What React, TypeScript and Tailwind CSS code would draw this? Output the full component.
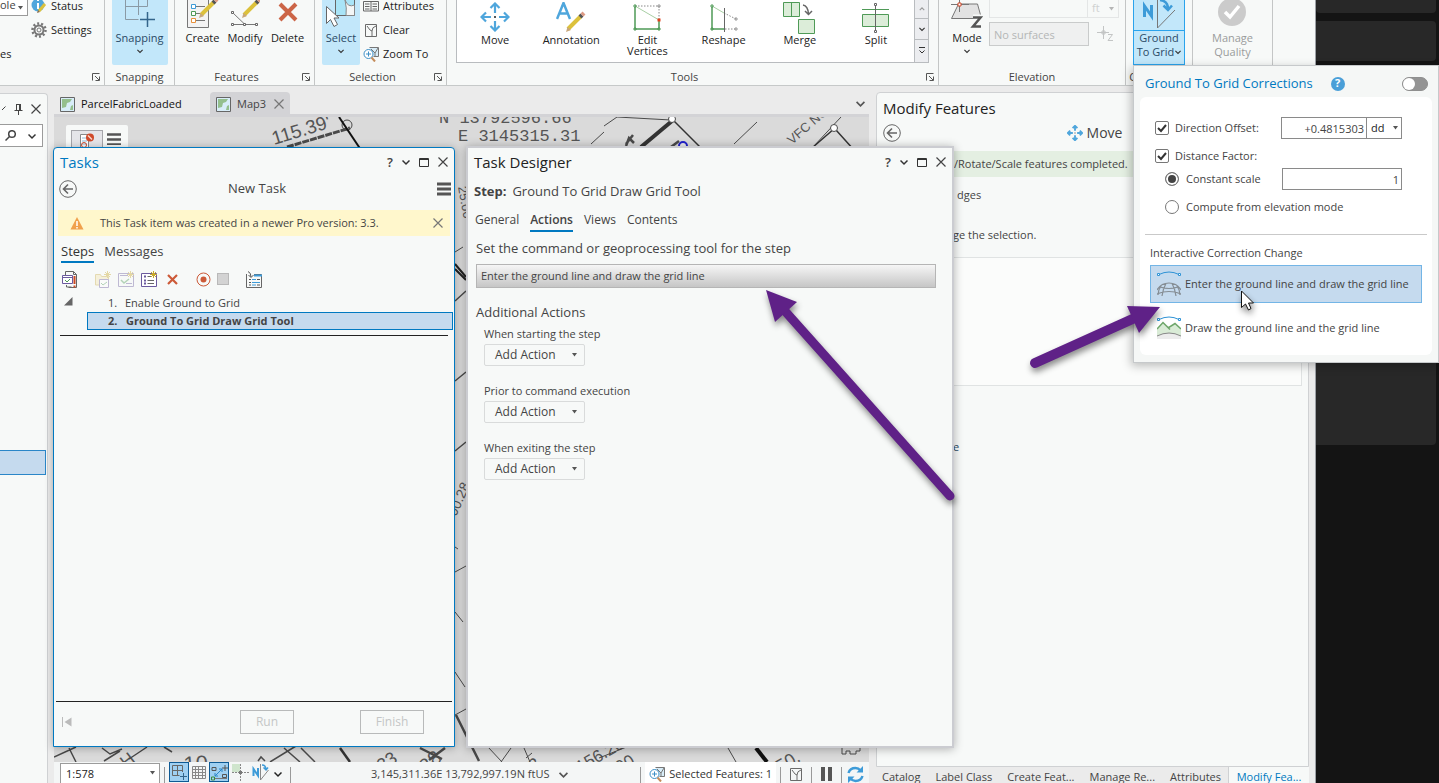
import { useState } from "react";
import type { ReactNode } from "react";

const line = "#6a6a6a";

export default function App() {
  return (
    <div className="relative flex h-screen w-full overflow-hidden bg-[#141414] font-['Open_Sans','Noto_Sans',sans-serif] text-[11px] text-[#444]">
      <div className="flex min-w-0 flex-1 flex-col border-r border-[#9da1a6] bg-[#ebebeb]">
        <Ribbon />
        <div className="flex min-h-0 flex-1">
          <LeftPane />
          <MapPane />
          <ModifyFeaturesPane />
        </div>
      </div>
      <DesktopStrip />

      <TasksWindow />
      <TaskDesignerWindow />
      <GroundToGridPopup />
      <CalloutArrows />
    </div>
  );
}

/* ---------- ribbon ---------- */

function Ribbon() {
  return (
    <div className="flex h-[86px] shrink-0 overflow-hidden border-b border-[#c6c9c9] bg-[#f7f9f8]">
      <RibbonGroup label="" launcher width="w-[105px]">
        <div className="w-7 shrink-0">
          <div className="flex h-4 items-center justify-between overflow-hidden border-r border-b border-[#9a9a9a] bg-white pr-1">
            <span className="-mt-1">ole</span>
            <Caret />
          </div>
          <div className="mt-[30px] leading-4 text-[#222]">es</div>
        </div>
        <div className="ml-[3px] flex flex-col">
          <SmallButton label="Status" icon={<StatusIcon />} />
          <SmallButton label="Settings" icon={<GearIcon />} />
        </div>
      </RibbonGroup>

      <RibbonGroup label="Snapping" width="w-[70px]" content="justify-center">
        <LargeButton label="Snapping" icon={<SnapIcon />} active chevron className="w-14" />
      </RibbonGroup>

      <RibbonGroup label="Features" launcher width="w-[140px]" content="pl-[6px]">
        <LargeButton label="Create" icon={<CreateIcon />} className="w-[43px]" />
        <LargeButton label="Modify" icon={<ModifyIcon />} className="w-[42px]" />
        <LargeButton label="Delete" icon={<DeleteIcon />} className="w-[43px]" />
      </RibbonGroup>

      <RibbonGroup label="Selection" launcher width="w-[132px]" content="pl-[7px]">
        <LargeButton label="Select" icon={<SelectIcon />} active chevron className="w-[38px]" />
        <div className="ml-[3px] flex flex-col">
          <SmallButton label="Attributes" icon={<TableIcon />} />
          <SmallButton label="Clear" icon={<ClearIcon />} />
          <SmallButton label="Zoom To" icon={<ZoomToIcon />} />
        </div>
      </RibbonGroup>

      <RibbonGroup label="Tools" launcher width="w-[492px]" content="px-[9px]">
        <div className="flex h-[63px] w-full border border-t-0 border-[#b9bcbf] bg-white">
          <div className="flex flex-1">
            <GalleryItem label="Move" icon={<MoveIcon size={30} />} />
            <GalleryItem label="Annotation" icon={<AnnotationIcon />} />
            <GalleryItem label="Edit Vertices" icon={<VerticesIcon />} />
            <GalleryItem label="Reshape" icon={<ReshapeIcon />} />
            <GalleryItem label="Merge" icon={<MergeIcon />} />
            <GalleryItem label="Split" icon={<SplitIcon />} />
          </div>
          <div className="flex w-[14px] flex-col border-l border-[#b9bcbf] bg-[#ecedf0]">
            <button type="button" aria-label="Scroll up" className="flex h-[18px] items-center justify-center">
              <Chevron up size={6} color="#9a9a9a" />
            </button>
            <button type="button" aria-label="Scroll down" className="flex h-[22px] items-center justify-center border-y border-[#b9bcbf]">
              <Chevron size={6} />
            </button>
            <button type="button" aria-label="More tools" className="flex flex-1 items-center justify-center">
              <svg width="6" height="8" viewBox="0 0 6 8" fill="none" stroke="#333">
                <path d="M0 .5h6M.5 3.500 3 6l2.500-2.500" />
              </svg>
            </button>
          </div>
        </div>
      </RibbonGroup>

      <RibbonGroup label="Elevation" width="w-[187px]" content="pl-[6px]">
        <LargeButton label="Mode" icon={<ModeIcon />} chevron className="w-11" />
        <div className="flex flex-col">
          <div className="flex">
            <div className="h-[18px] w-[99px] border border-t-0 border-[#e4e6e6]" />
            <div className="flex h-[18px] w-[31px] items-center justify-between border border-t-0 border-l-0 border-[#e4e6e6] px-1 text-[#cfd1d1]">
              ft <Caret color="#b5b5b5" />
            </div>
          </div>
          <div className="mt-1 flex items-center gap-2">
            <input
              aria-label="Elevation surface"
              disabled
              defaultValue="No surfaces"
              className="h-6 w-[100px] border border-[#c9cbcb] bg-[#eff0f0] px-1 text-[#b4b6b6]"
            />
            <svg width="17" height="16" viewBox="0 0 17 16" fill="none" stroke="#c3c5c5">
              <path d="M0 6.500h12M6.500 0v13M5 5h3v3H5zM11 8.500h4.500l-4.500 6h5" />
            </svg>
          </div>
        </div>
      </RibbonGroup>

      <RibbonGroup label="Corrections" width="w-[67px]" content="pl-[7px]">
        <button type="button" className="flex h-[65px] w-[52px] flex-col items-center border border-t-0 border-[#2aa3ec] bg-[#c2e7fa] leading-[14px] text-[#2b4a66]">
          <span className="flex h-[31px] w-full justify-center border-b border-[#2aa3ec]">
            <GroundGridIcon />
          </span>
          <span>Ground</span>
          <span className="flex items-center gap-px whitespace-nowrap">
            To Grid <Chevron size={6} />
          </span>
        </button>
      </RibbonGroup>

      <RibbonGroup label="" width="w-20" content="justify-center">
        <button type="button" disabled className="flex h-[60px] flex-col items-center leading-[14px] text-[#9a9c9c]">
          <svg width="28" height="31" viewBox="0 0 28 31">
            <circle cx="14" cy="12" r="14" fill="#cbcbcb" />
            <path d="m7 12 5 5 9-11" fill="none" stroke="#fff" strokeWidth="3.500" />
          </svg>
          <span>Manage</span>
          <span>Quality</span>
        </button>
      </RibbonGroup>
    </div>
  );
}

type RibbonGroupProps = {
  label: string;
  width: string;
  content?: string;
  launcher?: boolean;
  children: ReactNode;
};

function RibbonGroup({ label, width, content = "", launcher, children }: RibbonGroupProps) {
  return (
    <div className={`flex shrink-0 flex-col border-r border-[#c4c6c6] ${width}`}>
      <div className={`flex h-[69px] w-full ${content}`}>{children}</div>
      <div className="flex h-4 w-full items-center">
        <span className="flex-1 text-center leading-4">{label}</span>
        {launcher ? (
          <button type="button" aria-label={`${label} options`} className="flex w-4 justify-center">
            <svg width="8" height="8" viewBox="0 0 8 8" fill="none" stroke="#555">
              <path d="M7.500.5h-7v7M3 3l4 4M7.500 3.500v4h-4" />
            </svg>
          </button>
        ) : null}
      </div>
    </div>
  );
}

type LargeButtonProps = {
  label: string;
  icon: ReactNode;
  active?: boolean;
  chevron?: boolean;
  className?: string;
};

function LargeButton({ label, icon, active, chevron, className = "" }: LargeButtonProps) {
  return (
    <button
      type="button"
      className={`flex h-[65px] shrink-0 flex-col items-center ${
        active ? "rounded-b-xs bg-[#c2e7fa] text-[#2b4a66]" : "text-[#222]"
      } ${className}`}
    >
      <span className="flex h-[30px]">{icon}</span>
      <span className="leading-4">{label}</span>
      {chevron ? (
        <span className="mt-[2px]">
          <Chevron size={6} />
        </span>
      ) : null}
    </button>
  );
}

function SmallButton({ label, icon }: { label: string; icon: ReactNode }) {
  return (
    <button type="button" className="flex h-6 items-center gap-1 whitespace-nowrap text-[#222] first:-mt-[6px]">
      {icon}
      {label}
    </button>
  );
}

function GalleryItem({ label, icon }: { label: string; icon: ReactNode }) {
  return (
    <button type="button" className="flex flex-1 flex-col items-center pt-[2px] leading-[11px] text-[#222]">
      <span className="mb-px flex h-[31px]">{icon}</span>
      <span className="flex w-[60px] justify-center">{label}</span>
    </button>
  );
}

/* ---------- docked panes ---------- */

function LeftPane() {
  return (
    <div className="mt-[7px] flex w-12 shrink-0 flex-col rounded-tr-sm border-t border-r border-[#cfd1d3] bg-[#f7f9f8]">
      <div className="flex h-[30px] items-center justify-end gap-2 pr-[6px]">
        <svg width="4" height="6" viewBox="0 0 4 6" fill="none" stroke="#444">
          <path d="M0 4 3.500.5" />
        </svg>
        <svg width="9" height="11" viewBox="0 0 9 11" fill="none" stroke="#444">
          <path d="M2.500 0v6M2 .5h4M5.500 0v6M6.500 0v6M.5 6.500h8M4.500 7v4" />
        </svg>
        <CloseIcon size={10} />
      </div>
      <div className="mr-1 flex h-[23px] items-center justify-end gap-3 border border-l-0 border-[#9b9b9b] bg-white pr-[6px]">
        <svg width="11" height="11" viewBox="0 0 11 11" fill="none" stroke="#444" strokeWidth="1.500">
          <circle cx="7" cy="4" r="3.300" />
          <path d="M4.500 6.500.5 10.500" />
        </svg>
        <Chevron size={8} />
      </div>
      <div className="mt-[303px] mr-px h-[25px] border border-l-0 border-[#2a86c8] bg-[#c5daee]" />
    </div>
  );
}

function MapPane() {
  return (
    <div className="ml-[6px] flex min-w-0 flex-1 flex-col">
      <div className="flex h-[31px] items-end border-b-3 border-[#d3d3d6] pt-[6px]">
        <button type="button" className="flex h-[22px] w-[156px] items-center gap-[6px] pt-[2px] pl-[6px] text-[#111]">
          <MapDocIcon />
          ParcelFabricLoaded
        </button>
        <div className="flex h-[22px] items-center gap-2 rounded-t-sm bg-[#d3d3d6] px-[6px] pt-[2px]">
          <button type="button" className="flex items-center gap-[6px]">
            <MapDocIcon />
            Map3
          </button>
          <CloseIcon size={10} color="#777" />
        </div>
        <span className="mr-1 mb-[6px] ml-auto">
          <Chevron size={9} color="#555" />
        </span>
      </div>
      <div className="relative min-h-0 flex-1 overflow-hidden bg-[#dadada]">
        <MapLinework />
        <div className="absolute top-2 left-3 flex h-10 w-[62px] items-start gap-1 rounded-t-xs bg-[#f7f9f8] p-[5px]">
          <div className="flex h-7 w-8 justify-center border border-[#a5a5aa] bg-[#e5e5e9] pt-[2px]">
            <svg width="16" height="20" viewBox="0 0 16 20" fill="none">
              <path d="M1.500 1.500h8v18h-8z" fill="#fff" stroke="#888" />
              <path d="M3 5h5M3 8h5M3 11h5" stroke="#8db8d8" />
              <circle cx="11" cy="4.500" r="4" fill="#d0492a" />
              <path d="m9 2.500 4 4" stroke="#f6d9d0" strokeWidth="1.500" />
              <circle cx="5" cy="12" r="2.500" stroke="#d0492a" />
            </svg>
          </div>
          <svg width="14" height="15" viewBox="0 0 14 15" stroke="#555" strokeWidth="2.500">
            <path d="M0 4.500h14M0 9.500h14M0 14.500h14" />
          </svg>
        </div>
      </div>
      <StatusBar />
    </div>
  );
}

function StatusBar() {
  return (
    <div className="flex h-[21px] shrink-0 items-start overflow-hidden bg-[#f4f6f6] pl-[6px]">
      <div className="relative mt-px">
        <select aria-label="Map scale" className="h-[22px] w-[100px] appearance-none border border-[#9b9b9b] bg-white px-[5px] text-[#222]">
          <option>1:578</option>
        </select>
        <span className="absolute top-2 right-[5px]">
          <Caret />
        </span>
      </div>
      <Bar className="ml-1" />
      <div className="ml-1 flex gap-[3px]">
        <span className="flex size-5 items-center justify-center border border-[#0e5a94] bg-[#9fd0f2]">
          <svg width="17" height="17" viewBox="0 0 17 17" fill="none" stroke="#666">
            <path d="M1.500 1.500h10v10h-10zM6.500 1.500v10M1.500 6.500h10" />
            <path d="M12.500 8v8M8.500 12.500h8" stroke="#9fd0f2" strokeWidth="4" />
            <path d="M12.500 9v7M9 12.500h7" stroke="#33658b" />
          </svg>
        </span>
        <svg width="14" height="20" viewBox="0 0 14 20" fill="none" stroke="#888">
          <path d="M.5 4.500h13v12h-13zM3.500 4v13M6.500 4v13M10.500 4v13M0 7.500h14M0 10.500h14M0 13.500h14" />
        </svg>
        <span className="flex size-5 items-center justify-center border border-[#0e5a94] bg-[#9fd0f2]">
          <svg width="17" height="17" viewBox="0 0 17 17" fill="none" stroke="#555">
            <path d="M1 3.500h4v3H1zM11.500 10.500h4v3h-4zM14 1v6M11 4h6" />
            <path d="m4 12 7-7M4 9v3h3M8 5h3v3" stroke="#2a86c8" />
            <path d="M3 14.500h13" stroke="#777" />
            <path d="M.5 13h3v3h-3z" stroke="#3c8a3c" />
          </svg>
        </span>
        <svg width="17" height="20" viewBox="0 0 17 20" fill="none">
          <path d="M0 2h8v8H0z" fill="#cfe5cd" />
          <path d="M8.500 2v17M0 10.500h17" stroke="#888" strokeDasharray="2 1" />
          <path d="M7 9h3v3H7z" fill="#777" />
        </svg>
        <svg width="17" height="20" viewBox="0 0 17 20" fill="none">
          <path d="M1.500 14V7l4.500 6.500V6" stroke="#3d9bd8" strokeWidth="2" />
          <path d="M8.500 2v16l8-10" stroke="#888" />
          <path d="M10 3q4 0 4 5m-2.500-2.500L14 8l2-2.500" stroke="#3d9bd8" strokeWidth="1.500" />
        </svg>
        <span className="mt-2 ml-[2px]">
          <Chevron size={8} color="#222" />
        </span>
      </div>
      <Bar className="ml-2" />
      <span className="ml-20 flex h-6 min-w-0 items-center gap-[10px] whitespace-nowrap">
        3,145,311.36E 13,792,997.19N ftUS
        <Chevron size={9} color="#555" />
      </span>
      <div className="ml-auto flex items-start">
        <Bar />
        <span className="ml-1 flex h-6 items-center gap-1 bg-white px-1 whitespace-nowrap text-[#333]">
          <ZoomToIcon />
          Selected Features: 1
        </span>
        <Bar className="ml-1" />
        <span className="mx-[7px] mt-[6px]">
          <ClearIcon />
        </span>
        <Bar />
        <svg className="mx-[9px] mt-[5px]" width="11" height="14" viewBox="0 0 11 14" fill="#555">
          <path d="M0 0h4v14H0zM7 0h4v14H7z" />
        </svg>
        <Bar />
        <svg className="mx-[5px] mt-1" width="17" height="17" viewBox="0 0 17 17" fill="none" stroke="#3d9bd8" strokeWidth="2.500">
          <path d="M1.500 7q1.500-5 7-5 3 0 5 2.500M15.500 10q-1.500 5-7 5-3 0-5-2.500" />
          <path d="M16 0v6.500H9.500zM1 17v-6.500h6.500z" fill="#3d9bd8" stroke="none" />
        </svg>
      </div>
    </div>
  );
}

function Bar({ className = "" }: { className?: string }) {
  return <span className={`mt-[5px] h-4 w-px shrink-0 bg-[#999] ${className}`} />;
}

const paneTabs = ["Catalog", "Label Class", "Create Feat...", "Manage Re...", "Attributes"];

function ModifyFeaturesPane() {
  return (
    <div className="mt-[6px] mr-[6px] ml-[7px] flex w-[433px] shrink-0 flex-col">
      <div className="flex flex-1 flex-col rounded-t-sm border border-[#cfd1d3] bg-[#f7f9f8]">
        <h2 className="flex h-[30px] items-center pl-[6px] text-[15px] text-[#222]">Modify Features</h2>
        <div className="flex h-7 items-start pt-px pl-[6px]">
          <BackButton />
          <span className="flex flex-1 items-center justify-center gap-1 pr-5 text-sm leading-[18px]">
            <MoveIcon size={16} />
            Move
          </span>
        </div>
        <div className="flex h-[26px] items-center bg-[#e4efe2] pl-[77px] whitespace-nowrap">/Rotate/Scale features completed.</div>
        <div className="mt-[10px] pl-20 leading-4">dges</div>
        <div className="mt-6 pl-[76px] leading-4">ge the selection.</div>
        <div className="mt-[14px] mr-[6px] ml-[6px] h-[129px] border border-[#e0e3e3] bg-[#fbfcfb]" />
        <div className="mt-[53px] pl-[76px] leading-4 text-[#2b4a66]">e</div>
      </div>
      <div className="flex h-4 shrink-0 overflow-hidden">
        <div className="flex h-5 flex-1 items-center justify-between border-r border-[#cfd1d3] pr-[7px] pl-[6px]">
          {paneTabs.map((tab) => (
            <button key={tab} type="button" className="whitespace-nowrap">
              {tab}
            </button>
          ))}
        </div>
        <button type="button" className="h-5 w-20 bg-[#f7f9f8] whitespace-nowrap text-[#0079c1]">
          Modify Fea...
        </button>
      </div>
    </div>
  );
}

function DesktopStrip() {
  return (
    <div className="flex w-[123px] shrink-0 flex-col gap-2 pr-[3px]">
      <div className="h-[13px] rounded-b-sm bg-[#282828]" />
      <div className="h-10 rounded-r-sm bg-[#282828]" />
      <div className="h-[376px] rounded-r-sm bg-[#282828]" />
    </div>
  );
}

/* ---------- floating windows ---------- */

function WindowTitle({ title, accent }: { title: string; accent?: boolean }) {
  return (
    <div className="flex h-7 items-center pr-[6px] pl-[6px]">
      <h2 className={`flex-1 text-[15px] ${accent ? "text-[#0079c1]" : "text-[#222]"}`}>{title}</h2>
      <div className="flex items-center gap-[9px]">
        <button type="button" aria-label="Help" className="text-[13px] leading-4 font-semibold">
          ?
        </button>
        <button type="button" aria-label="Window menu">
          <Chevron size={8} />
        </button>
        <button type="button" aria-label="Maximize">
          <svg width="10" height="9" viewBox="0 0 10 9" fill="none" stroke="#333">
            <path d="M.5.5h9v8h-9zM0 1.500h10" />
          </svg>
        </button>
        <button type="button" aria-label="Close">
          <CloseIcon size={10} />
        </button>
      </div>
    </div>
  );
}

function TasksWindow() {
  return (
    <section className="absolute top-[147px] left-[53px] flex h-[600px] w-[402px] flex-col rounded-t-sm border border-[#0079c1] bg-[#f7f9f8] shadow-[0_1px_9px_rgba(0,0,0,0.3)]">
      <WindowTitle title="Tasks" accent />
      <div className="flex h-[26px] items-center justify-between pr-[3px] pl-[5px]">
        <BackButton />
        <span className="text-[13px]">New Task</span>
        <svg width="14" height="14" viewBox="0 0 14 14" stroke="#555" strokeWidth="3">
          <path d="M0 2h14M0 7h14M0 12h14" />
        </svg>
      </div>
      <div className="mx-1 mt-2 flex h-[26px] items-center bg-[#fff7cc] pr-[7px] pl-3">
        <svg width="14" height="13" viewBox="0 0 14 13">
          <path d="M7 0 13.500 12.500H.5z" fill="#f0a04c" />
          <path d="M7 4v5M7 10v1.500" stroke="#fff" strokeWidth="1.500" />
        </svg>
        <span className="ml-4 flex-1 whitespace-nowrap">This Task item was created in a newer Pro version: 3.3.</span>
        <button type="button" aria-label="Dismiss">
          <CloseIcon size={10} color="#777" />
        </button>
      </div>
      <div className="mt-[5px] flex gap-[10px] pl-[7px] text-[13px] leading-5">
        <button type="button" className="border-b-2 border-[#0079c1] font-medium text-[#333]">
          Steps
        </button>
        <button type="button" className="border-b-2 border-transparent">
          Messages
        </button>
      </div>
      <div className="mt-[7px] flex h-[18px] items-center pl-2">
        <StepsToolbar />
      </div>
      <div className="mt-[6px] flex h-[18px] items-center pl-[10px]">
        <svg className="mb-1" width="9" height="9" viewBox="0 0 9 9">
          <path d="M8.500 0v8.500H0z" fill="#666" />
        </svg>
        <span className="ml-[35px] w-[17px]">1.</span>
        Enable Ground to Grid
      </div>
      <div className="mr-px ml-[33px] flex h-[18px] items-center border border-[#0079c1] bg-[#c5daee] pl-5 font-bold">
        <span className="w-[18px]">2.</span>
        Ground To Grid Draw Grid Tool
      </div>
      <div className="mt-[5px] mr-[6px] ml-[6px] border-t border-[#222]" />

      <div className="mx-[2px] mt-auto flex h-[45px] items-start border-t border-[#222] pt-2 pl-[6px]">
        <button type="button" disabled aria-label="Restart" className="mt-[7px]">
          <svg width="10" height="10" viewBox="0 0 10 10">
            <path d="M.5 0v10" stroke="#bbb" />
            <path d="M9.500.5v9L2.500 5z" fill="#bbb" />
          </svg>
        </button>
        <button type="button" disabled className="ml-[168px] h-6 w-[54px] border border-[#b8baba] text-xs text-[#c4c6c6]">
          Run
        </button>
        <button type="button" disabled className="ml-[66px] h-6 w-16 border border-[#b8baba] text-xs text-[#c4c6c6]">
          Finish
        </button>
      </div>
    </section>
  );
}

function StepsToolbar() {
  return (
    <div className="flex items-center">
      <button type="button" aria-label="Task item">
        <svg width="16" height="17" viewBox="0 0 16 17" fill="none">
          <path d="M3.500 5V.5h8l3 3v13h-8M11.500.5v3h3" stroke="#666" />
          <path d="M.5 4.500h10v8H.5zM.5 6.500h10" stroke="#6b5a9e" fill="#fff" />
          <path d="m3 9 2 2 3-3" stroke="#4f9a57" />
          <path d="M4.500 14v2h5" stroke="#666" />
          <path d="M12.500 5v8M12.500 14.500v2" stroke="#cc4a24" strokeWidth="2" />
        </svg>
      </button>
      <button type="button" disabled aria-label="New task group" className="ml-[17px] opacity-40">
        <svg width="16" height="17" viewBox="0 0 16 17" fill="none">
          <path d="M.5 14V3.500h5l1 2h7V14z" fill="#f4e5ae" stroke="#c8ac4a" />
          <path d="M4.500 8.500h9v8h-9z" fill="#fff" stroke="#6b5a9e" />
          <path d="m6 12 2 2 4-3" stroke="#4f9a57" />
          <Spark />
        </svg>
      </button>
      <button type="button" disabled aria-label="New task" className="ml-[7px] opacity-40">
        <svg width="17" height="17" viewBox="0 0 17 17" fill="none">
          <path d="M.5 2.500h15v13H.5zM2 4.500h8" stroke="#6b5a9e" />
          <path d="m3 9 3 3 5-4" stroke="#4f9a57" strokeWidth="1.500" />
          <path d="M8 12.500h6" stroke="#6b5a9e" />
          <Spark />
        </svg>
      </button>
      <button type="button" aria-label="New step" className="ml-[6px]">
        <svg width="17" height="17" viewBox="0 0 17 17" fill="none">
          <path d="M.5 2.500h15v13H.5z" stroke="#6b5a9e" fill="#fff" />
          <path d="M3 5.500h2M3 9.500h2M3 12.500h2" stroke="#6b5a9e" strokeWidth="2" />
          <path d="M6.500 5.500H10M6.500 9.500H13M6.500 12.500H13" stroke="#666" />
          <Spark />
        </svg>
      </button>
      <button type="button" aria-label="Delete step" className="ml-[9px]">
        <svg width="11" height="11" viewBox="0 0 11 11" stroke="#cc5a38" strokeWidth="2.200">
          <path d="m1 1 9 9M10 1l-9 9" />
        </svg>
      </button>
      <button type="button" aria-label="Record" className="ml-[18px]">
        <svg width="15" height="15" viewBox="0 0 15 15" fill="none">
          <circle cx="7.500" cy="7.500" r="6.500" stroke="#cc5a38" />
          <circle cx="7.500" cy="7.500" r="3" fill="#cc5a38" />
        </svg>
      </button>
      <span className="ml-[6px] size-3 border border-[#b9b9b9] bg-[#d3d3d3]" />
      <button type="button" aria-label="Task designer" className="ml-[17px]">
        <svg width="17" height="17" viewBox="0 0 17 17" fill="none">
          <path d="M.5 3v13.500h15V3.500H8" stroke="#666" />
          <path d="M8 4.500h8" stroke="#3d9bd8" strokeWidth="2" />
          <path d="M2 .5q3 1 3 5.500m-2.500-2L5 6.500 7.500 4" stroke="#555" />
          <path d="M3 8.500h2M3 11.500h2M3 14h2M11 8.500h3M11 14h3" stroke="#555" />
          <path d="M6 8.500h4M6 11.500h8M6 14h4" stroke="#3d9bd8" />
        </svg>
      </button>
    </div>
  );
}

function Spark() {
  return <path d="M12.500 0v7M9 3.500h7M10 1l5 5M15 1l-5 5" stroke="#c8a92c" />;
}

const designerTabs = ["General", "Actions", "Views", "Contents"];
const actionSlots = ["When starting the step", "Prior to command execution", "When exiting the step"];

function TaskDesignerWindow() {
  const [tab, setTab] = useState("Actions");

  return (
    <section className="absolute top-[146px] left-[466px] flex h-[602px] w-[488px] flex-col border-2 border-[#cbccd1] bg-[#f7f9f8] shadow-[0_1px_9px_rgba(0,0,0,0.3)]">
      <WindowTitle title="Task Designer" />
      <p className="pt-[5px] pl-[6px] text-[13px] leading-5">
        <b className="mr-[6px]">Step:</b>Ground To Grid Draw Grid Tool
      </p>
      <div className="mt-[9px] flex gap-[11px] pl-[7px] text-xs leading-5">
        {designerTabs.map((name) => (
          <button
            key={name}
            type="button"
            onClick={() => setTab(name)}
            className={`border-b-2 ${tab === name ? "border-[#0079c1] font-semibold" : "border-transparent"}`}
          >
            {name}
          </button>
        ))}
      </div>
      <h3 className="mt-[6px] pl-2 text-[13px] leading-5 font-medium">Set the command or geoprocessing tool for the step</h3>
      <button
        type="button"
        className="mt-[6px] mr-4 ml-2 h-6 border border-[#b5b5b5] bg-linear-to-b from-[#f6f6f6] to-[#c6c6c6] pl-1 text-left"
      >
        Enter the ground line and draw the grid line
      </button>
      <h3 className="mt-[14px] pl-2 text-[13px] leading-5 font-medium">Additional Actions</h3>
      {actionSlots.map((slot) => (
        <div key={slot} className="mb-[13px] pt-1 pl-4">
          <div className="leading-4">{slot}</div>
          <button
            type="button"
            className="mt-[2px] flex h-[22px] w-[101px] items-center justify-between rounded-xs border border-[#d9dbdb] pr-[7px] pl-[10px] text-xs"
          >
            Add Action
            <Caret />
          </button>
        </div>
      ))}
    </section>
  );
}

function GroundToGridPopup() {
  const [mode, setMode] = useState("constant");

  return (
    <section className="absolute top-[65px] right-0 flex h-[298px] w-[306px] flex-col border border-[#c6c9cb] bg-[#f5f7f6] px-[6px] pb-[7px] shadow-[-2px_3px_9px_rgba(0,0,0,0.25)]">
      <header className="flex h-[31px] shrink-0 items-center pt-1 pr-1 pl-[5px]">
        <h2 className="text-[13px] font-medium text-[#0079c1]">Ground To Grid Corrections</h2>
        <button type="button" aria-label="Help" className="ml-[18px] flex size-[14px] items-center justify-center rounded-full bg-[#4a9fd8] text-[11px] font-bold text-white">
          ?
        </button>
        <button type="button" role="switch" aria-checked="false" aria-label="Enable corrections" className="ml-auto flex h-[14px] w-[26px] rounded-full border border-[#8f8f8f] bg-[#949494]">
          <span className="size-3 rounded-full bg-white" />
        </button>
      </header>

      <div className="flex-1 rounded-md bg-white pt-5">
        <div className="flex h-[22px] items-center pr-[30px] pl-[15px]">
          <CheckRow id="direction" label="Direction Offset:" />
          <div className="ml-auto flex">
            <input
              aria-label="Direction offset value"
              defaultValue="+0.4815303"
              className="h-[22px] w-[86px] border border-[#8a8a8a] px-[2px] text-right"
            />
            <div className="relative">
              <select aria-label="Direction offset unit" className="-ml-px h-[22px] w-9 appearance-none border border-[#8a8a8a] bg-white pl-1 text-[#222]">
                <option>dd</option>
              </select>
              <span className="absolute top-[9px] right-1">
                <Caret />
              </span>
            </div>
          </div>
        </div>
        <div className="mt-[6px] flex h-[22px] items-center pl-[15px]">
          <CheckRow id="distance" label="Distance Factor:" />
        </div>
        <div className="mt-px flex h-[22px] items-center pr-[30px] pl-[25px]">
          <RadioRow id="constant" label="Constant scale" checked={mode === "constant"} onChange={() => setMode("constant")} />
          <input aria-label="Scale factor" defaultValue="1" className="ml-auto h-[22px] w-[120px] border border-[#8a8a8a] px-[2px] text-right" />
        </div>
        <div className="mt-[6px] flex h-[22px] items-center pl-[25px]">
          <RadioRow id="elevation" label="Compute from elevation mode" checked={mode === "elevation"} onChange={() => setMode("elevation")} />
        </div>
        <hr className="mx-[5px] mt-4 border-[#c9c9c9]" />
        <h3 className="mt-[10px] pl-[10px] leading-4">Interactive Correction Change</h3>
        <button type="button" className="mt-1 ml-[10px] flex h-[38px] w-[272px] items-center gap-1 border border-[#73b5e6] bg-[#c5daee] pl-[6px] whitespace-nowrap">
          <GlobeLineIcon />
          Enter the ground line and draw the grid line
        </button>
        <button type="button" className="mt-[6px] ml-[10px] flex h-[38px] w-[272px] items-center gap-1 pl-[7px] whitespace-nowrap">
          <TerrainLineIcon />
          Draw the ground line and the grid line
        </button>
      </div>
    </section>
  );
}

function CheckRow({ id, label }: { id: string; label: string }) {
  return (
    <label htmlFor={id} className="flex items-center gap-[6px]">
      <span className="relative flex size-[14px]">
        <input id={id} type="checkbox" defaultChecked className="size-[14px] appearance-none rounded-xs border border-[#777] bg-white" />
        <svg className="pointer-events-none absolute inset-0" width="14" height="14" viewBox="0 0 14 14" fill="none" stroke="#333" strokeWidth="2">
          <path d="m3 7 3 3 5-6" />
        </svg>
      </span>
      {label}
    </label>
  );
}

type RadioRowProps = {
  id: string;
  label: string;
  checked: boolean;
  onChange: () => void;
};

function RadioRow({ id, label, checked, onChange }: RadioRowProps) {
  return (
    <label htmlFor={id} className="flex items-center gap-[7px] whitespace-nowrap">
      <input
        id={id}
        type="radio"
        name="distance-mode"
        checked={checked}
        onChange={onChange}
        className="size-[14px] appearance-none rounded-full border border-[#777] bg-white checked:bg-[#444] checked:shadow-[inset_0_0_0_2px_#fff]"
      />
      {label}
    </label>
  );
}

/* ---------- map and callouts ---------- */

function MapLinework() {
  return (
    <svg className="absolute top-0 left-0" width="815" height="646" viewBox="0 0 815 646" fill="none" stroke="#4a4a4a">
      <g fill="#555" stroke="none" fontFamily="Liberation Sans" fontSize="17">
        <text transform="translate(220 28) rotate(-17)" fontSize="19">115.39&#39;</text>
        <text x="385" y="6" fontFamily="Liberation Mono">N 13792596.66</text>
        <text x="404" y="24" fontFamily="Liberation Mono">E 3145315.31</text>
        <text transform="translate(738 28) rotate(-41)" fontSize="13">VFC NO</text>
        <text transform="translate(130 655) rotate(-4)" fontSize="22">10</text>
        <text transform="translate(72 652) rotate(-38)" fontSize="18">H</text>
        <text transform="translate(328 655) rotate(-34)" fontSize="18">33</text>
        <text transform="translate(372 657) rotate(-40)" fontSize="20">28</text>
        <text transform="translate(482 655) rotate(-48)" fontSize="18">8</text>
        <text transform="translate(526 656) rotate(-30)" fontSize="17">156.20</text>
        <text transform="translate(545 668) rotate(-30)" fontSize="17">75.00</text>
        <text transform="translate(726 656) rotate(-30)" fontSize="18">50.</text>
        <text transform="translate(404 70) rotate(80)" fontSize="13">25.00</text>
        <text transform="translate(402 400) rotate(-66)" fontSize="14">00.28</text>
      </g>
      <path d="M233 30 296 11" strokeWidth="3" strokeDasharray="7 1" />
      <circle cx="293" cy="8" r="5" />
      <path d="m285 0 22 33" stroke="#111" strokeWidth="2" />
      <path d="m563 0 54 3M550 9 563 0M537 27l13-12M680 27l23-22M787 0l-28 30" />
      <path d="m618 4-31 26" stroke="#333" strokeWidth="4" />
      <path d="m620 4 26 26M781 11l-23 20M782 13l18 20" stroke="#333" strokeWidth="1.500" />
      <path d="m572 29 3-8 5 5m-8 1 7-9m38 12 8-6" strokeWidth="2.500" />
      <circle cx="618" cy="2" r="3.500" fill="#fff" />
      <circle cx="780" cy="11" r="3.500" fill="#fff" />
      <circle cx="629" cy="29" r="4" stroke="#22c" fill="#eee" strokeWidth="2" />

      <path d="m401 152 11 11M401 147l11 13" stroke="#222" strokeWidth="2" />
      <path d="m401 184 11-10M401 264l11-9M401 334l11-9" strokeWidth="1.500" />
      <path d="m401 135 8-5M401 455l11-6M401 495l8 10M401 555l10 15M401 598l11-6M401 430l3 2" />

      <path d="m0 640 22-10M15 631l7 14M48 631l8 6 12-5M50 644l16-10M75 642l18-12M110 630l8 5" strokeWidth="1.500" />
      <path d="m216 645 26-16M230 631l16 14M247 631l14 14M204 644l3-4 4 4" strokeWidth="1.500" />
      <path d="m286 631 10 14" stroke="#333" strokeWidth="2.500" />
      <path d="m366 631 22 11M375 643l16-12M402 598l23 46" strokeWidth="2.500" />
      <path d="m434 630 14 15M457 631l-10 14M472 641l6-5M470 631l6 14M545 641l30-12M674 631l8 14" />
      <path d="m702 631 11 14" stroke="#111" strokeWidth="4" />
      <path d="M788 631v6h4v-3h4v3h6v-3h4v-6" />
    </svg>
  );
}

function CalloutArrows() {
  return (
    <svg
      className="pointer-events-none absolute top-0 right-0 drop-shadow-[1px_4px_3px_rgba(0,0,0,0.45)]"
      width="700"
      height="520"
      viewBox="739 0 700 520"
      fill="#5f2187"
      stroke="#5f2187"
    >
      <path d="M784 310 950 496" strokeWidth="9" strokeLinecap="round" />
      <path d="M766 290 797 302 775 322z" stroke="none" />
      <path d="M1137 317 1035 363" strokeWidth="10" strokeLinecap="round" />
      <path d="M1160 307 1127 306 1139 333z" stroke="none" />
      <path d="M1241.500 291v16.500l4-3.500 3 6 2.500-1.500-2.500-5.500h5z" fill="#fff" stroke="#111" />
    </svg>
  );
}

/* ---------- icons ---------- */

function Caret({ color = "#555" }: { color?: string }) {
  return (
    <svg width="5" height="4" viewBox="0 0 5 4" fill={color}>
      <path d="M0 0h5L2.500 3.500z" />
    </svg>
  );
}

function Chevron({ size, up, color = "#333" }: { size: number; up?: boolean; color?: string }) {
  return (
    <svg width={size} height={size} viewBox="0 0 8 8" fill="none" stroke={color} strokeWidth="1.500">
      <path d={up ? "m1 5.500 3-3 3 3" : "m.5 2.500L4 6l3.500-3.500"} />
    </svg>
  );
}

function CloseIcon({ size, color = "#444" }: { size: number; color?: string }) {
  return (
    <svg width={size} height={size} viewBox="0 0 10 10" stroke={color} strokeWidth="1.200">
      <path d="m.5.5 9 9M9.500.5l-9 9" />
    </svg>
  );
}

function BackButton() {
  return (
    <button type="button" aria-label="Back">
      <svg width="18" height="18" viewBox="0 0 18 18" fill="none" stroke="#666">
        <circle cx="9" cy="9" r="8.300" />
        <path d="M4.500 9H14M9 4.500 4.500 9 9 13.500" strokeWidth="1.600" />
      </svg>
    </button>
  );
}

function MapDocIcon() {
  return (
    <svg width="15" height="15" viewBox="0 0 15 15">
      <path d="M.5.500h14v14H.5z" fill="#d8edf8" stroke="#666" />
      <path d="M2 2h10l-2 3-3 1-1 4-4 1zM10 13l1-4 2-1v5z" fill="#94bf8d" />
    </svg>
  );
}

function Pencil({ x, y }: { x: number; y: number }) {
  return (
    <g transform={`translate(${x} ${y})`}>
      <path d="M2 16 15 3" stroke="#dcc13c" strokeWidth="4" />
      <path d="m14 4 2-2" stroke="#555" strokeWidth="4" />
      <path d="m16 2 2-2" stroke="#dd9a84" strokeWidth="4" />
      <path d="m0 19 1.500-5L5 17z" fill="#c7a67a" />
    </g>
  );
}

function StatusIcon() {
  return (
    <svg width="16" height="15" viewBox="0 0 16 15" fill="none">
      <circle cx="7" cy="6" r="6.500" fill="#4fa6dc" />
      <path d="M7 0v2M7 4v6" stroke="#fff" strokeWidth="2" />
      <path d="m8 12 6-7" stroke="#dcc13c" strokeWidth="3" />
      <path d="m6 14 1-3 2 2z" fill="#8a6d4a" />
    </svg>
  );
}

function GearIcon() {
  return (
    <svg width="16" height="16" viewBox="0 0 16 16" fill="none" stroke="#777">
      <circle cx="8" cy="8" r="6.500" strokeWidth="2.500" strokeDasharray="2 2" />
      <circle cx="8" cy="8" r="4.500" strokeWidth="2" />
      <circle cx="8" cy="8" r="2" />
    </svg>
  );
}

function SnapIcon() {
  return (
    <svg width="30" height="29" viewBox="0 0 30 29" fill="none">
      <path d="M.5 0v19.500h13M13.500 0v15M.5 6.500h22V0" stroke="#8a9aa5" />
      <path d="M22.500 12v15M15 19.500h15" stroke="#33658b" strokeWidth="1.500" />
    </svg>
  );
}

function CreateIcon() {
  return (
    <svg width="32" height="29" viewBox="0 0 32 29" fill="none">
      <path d="M.5 0v27.500h21V0" fill="#f3f3f3" stroke="#777" />
      <path d="M9 6.500h9M9 13.500h9M9 20.500h9" stroke="#777" />
      <path d="M4.500 4.500h4v4h-4z" stroke="#3d9bd8" fill="#fff" />
      <path d="M4.500 11.500h4v4h-4z" stroke="#4f9a57" fill="#fff" />
      <path d="M4.500 18.500h4v4h-4z" stroke="#e8923c" fill="#fff" />
      <Pencil x={12} y={-1} />
    </svg>
  );
}

function ModifyIcon() {
  return (
    <svg width="30" height="29" viewBox="0 0 30 29" fill="none">
      <path d="M2.500 12.500 15 24.500M1 24.500h26" stroke="#777" />
      <path d="M1.500 11.500h2v2h-2zM1.500 23.500h2v2h-2zM13.500 23.500h2v2h-2zM25.500 23.500h2v2h-2z" fill="#fff" stroke="#666" />
      <Pencil x={12} y={-1} />
    </svg>
  );
}

function DeleteIcon() {
  return (
    <svg width="20" height="29" viewBox="0 0 20 29" fill="none" stroke="#cc6547" strokeWidth="4">
      <path d="m2 4 16 16M18 4 2 20" />
    </svg>
  );
}

function SelectIcon() {
  return (
    <svg width="30" height="29" viewBox="0 0 30 29" fill="none">
      <path d="M9.500 0v15.500h19V0" fill="#a9e4f7" stroke="#666" />
      <path d="M19 0q3 8 9.500 5v10.500H20Q21 8 19 0z" fill="#f4f6f6" stroke="#888" />
      <path d="M.5 6.500v17l4-4 3.500 7 3.500-2-3.500-6.500h5z" fill="#fff" stroke="#666" />
    </svg>
  );
}

function TableIcon() {
  return (
    <svg width="16" height="11" viewBox="0 0 16 11" fill="none" stroke="#666">
      <path d="M.5.500h15v9.500H.5zM8 0v10M2 3h4.500M2 5.500h4.500M2 8h4.500M9.500 3H14M9.500 5.500H14M9.500 8H14" />
    </svg>
  );
}

function ClearIcon() {
  return (
    <svg width="16" height="13" viewBox="0 0 16 13" fill="none" stroke={line}>
      <path d="M2.500.5h11v12h-11zM4 2l3 4 2 1v5M13 2q-4 1-4 5" />
    </svg>
  );
}

function ZoomToIcon() {
  return (
    <svg width="16" height="16" viewBox="0 0 16 16" fill="none">
      <path d="M6.500 1.500h9v9h-5" fill="#d8edf8" stroke="#777" />
      <path d="m8 3 4 4v3M15 2l-3 5" stroke="#777" />
      <circle cx="5.500" cy="8" r="4.500" fill="#fff" stroke="#3d8fc6" />
      <path d="M3 8h5M5.500 5.500v5" stroke="#3d8fc6" />
      <path d="m8.500 11.500 3.500 4" stroke="#c58d5c" strokeWidth="2" />
    </svg>
  );
}

function MoveIcon({ size }: { size: number }) {
  return (
    <svg width={size} height={size} viewBox="0 0 30 30" fill="none" stroke="#4fa6dc" strokeWidth={size > 20 ? 2.2 : 3.5}>
      <path d="M15 11V2M10.500 6 15 1.500 19.500 6M15 19v9M10.500 24l4.500 4.500 4.500-4.500M11 15H2M6 10.500 1.500 15 6 19.500M19 15h9M24 10.500l4.500 4.500-4.500 4.500" />
      <path d="M14 14h2v2h-2z" fill="#555" stroke="none" />
    </svg>
  );
}

function AnnotationIcon() {
  return (
    <svg width="30" height="31" viewBox="0 0 30 31" fill="none">
      <path d="m1 17 6.500-16L14 17M3.500 11.500h8" stroke="#4fa6dc" strokeWidth="2.500" />
      <g transform="translate(10 11)">
        <Pencil x={0} y={0} />
      </g>
    </svg>
  );
}

function VerticesIcon() {
  return (
    <svg width="28" height="31" viewBox="0 0 28 31" fill="none">
      <path d="M2 5v22h24V17" stroke="#4f9a57" strokeWidth="1.500" />
      <path d="m2 4 24 14" stroke="#a8cfa4" />
      <path d="M2 4h24v13" stroke="#888" strokeDasharray="1.500 1.500" />
      <path d="M1 3h2v2H1zM1 26h2v2H1zM25 26h2v2h-2z" stroke="#4f9a57" />
      <path d="M25 3h2v2h-2z" stroke="#999" />
      <path d="M24.500 16.500h3v3h-3z" fill="#e0401c" />
    </svg>
  );
}

function ReshapeIcon() {
  return (
    <svg width="28" height="31" viewBox="0 0 28 31" fill="none">
      <path d="M2 5v22h12" stroke="#4f9a57" strokeWidth="1.500" />
      <path d="m2 4 12 7" stroke="#a8cfa4" />
      <path d="m14 11 12 6M15 27h11" stroke="#888" strokeDasharray="1.500 1.500" />
      <path d="M14.500 6v24" stroke="#666" />
      <path d="M1 3h2v2H1zM1 26h2v2H1z" stroke="#4f9a57" />
      <path d="M25 16h2v2h-2zM25 26h2v2h-2z" stroke="#999" />
    </svg>
  );
}

function MergeIcon() {
  return (
    <svg width="33" height="33" viewBox="0 0 33 33" fill="none">
      <path d="M.5.500h16v14H.5zM8.500.500v14M15.500 17.500h16v14h-16z" fill="#dcedd9" stroke="#4f9a57" />
      <path d="M20 3q5 1 5.500 9M22 9l3.500 3.500L29 9" stroke="#666" strokeWidth="1.500" />
    </svg>
  );
}

function SplitIcon() {
  return (
    <svg width="27" height="31" viewBox="0 0 27 31" fill="none">
      <path d="M.5 12.500h26v12H.5z" fill="#dcedd9" stroke="#4f9a57" />
      <path d="M0 7.500h27" stroke="#4f9a57" />
      <path d="M13.500 3v26" stroke="#666" />
      <path d="M12.500 1.500h2v2h-2zM12.500 28.500h2v2h-2z" stroke="#666" />
    </svg>
  );
}

function ModeIcon() {
  return (
    <svg width="32" height="30" viewBox="0 0 32 30" fill="none">
      <path d="M7.500 4h19l4 14.500H.5z" fill="#e2e2e2" stroke="#777" />
      <path d="M0 4.500h18M8.500 0v12" stroke="#777" />
      <path d="M7 3h3v3H7z" fill="#fff" stroke="#d0492a" />
      <path d="M22 17.500h7.500L22 26.500h8" stroke="#f7f9f8" strokeWidth="6" />
      <path d="M22 17.500h7.500L22 26.500h8" stroke="#555" strokeWidth="2.500" />
    </svg>
  );
}

function GroundGridIcon() {
  return (
    <svg width="34" height="29" viewBox="0 0 34 29" fill="none">
      <path d="M2.500 17V6l7 10V5" stroke="#3d9bd8" strokeWidth="3" />
      <path d="M15.500 0v28L33 10" stroke="#777" />
      <path d="M18 0q8 1 8 9m-4.500-3.500L26 10l4-4.500" stroke="#3d9bd8" strokeWidth="2.500" />
    </svg>
  );
}

function GroundLine() {
  return (
    <>
      <path d="M2 3.500q10-5 20 0" stroke="#2f93d6" />
      <path d="M.5 2.500h2v2h-2zM21.500 2.500h2v2h-2z" fill="#fff" stroke="#2f93d6" />
    </>
  );
}

function GlobeLineIcon() {
  return (
    <svg className="shrink-0" width="24" height="26" viewBox="0 0 24 26" fill="none">
      <path
        d="M0 19q4-7 12-7t12 7M3 16q9 3 18 0M0 23q12-5 24 0M9 12.500q-3 5-4 12.500M15 12.500q3 5 4 12.500M4 15q-3 4-3 9M20 15q3 4 3 9"
        stroke="#858d94"
        strokeWidth="1.200"
      />
      <GroundLine />
    </svg>
  );
}

function TerrainLineIcon() {
  return (
    <svg className="shrink-0" width="24" height="24" viewBox="0 0 24 24" fill="none">
      <path d="m0 12 6-6 7 6 5-4 6 5v10H0z" fill="#d9ebd6" />
      <path d="M0 20q12-6 24 0v3H0z" fill="#ececec" />
      <path d="m0 13 6-6.500 7 7M11 12l7-4.500 6 5.500" stroke="#6ea66a" strokeWidth="1.500" />
      <path d="M0 20q12-6 24 0" stroke="#888" />
      <GroundLine />
    </svg>
  );
}
